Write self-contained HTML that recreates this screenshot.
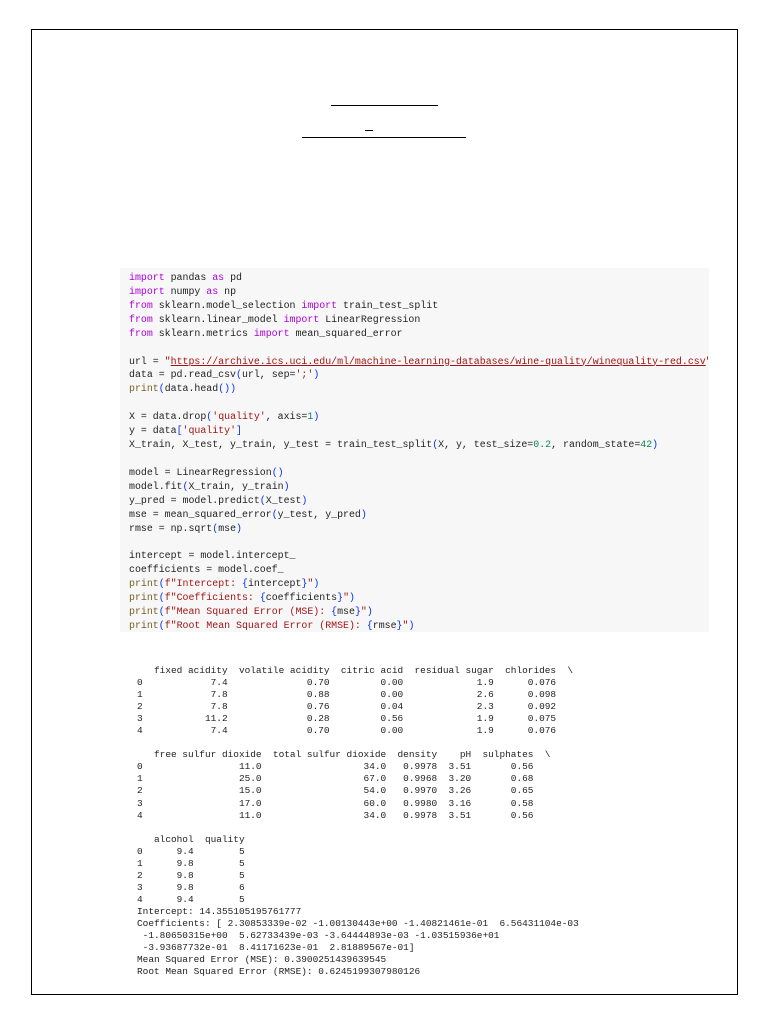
<!DOCTYPE html>
<html><head><meta charset="utf-8"><style>
body{margin:0;width:768px;height:1024px;background:#fff;position:relative;overflow:hidden}
.frame{position:absolute;left:31px;top:29px;width:705px;height:964px;border:1px solid #000}
.ln{position:absolute;height:1px;background:#000}
.code{position:absolute;left:120px;top:268px;width:589px;height:364px;background:#f7f7f7;overflow:hidden}
.code pre{margin:0;position:absolute;left:9px;top:3px;font:9.92px/13.92px "Liberation Mono",monospace;color:#222;white-space:pre}
.out{margin:0;position:absolute;left:137px;top:665px;font:9.45px/12.04px "Liberation Mono",monospace;color:#222;white-space:pre}
.k{color:#af00db}.f{color:#795e26}.s{color:#a31515}.p{color:#0431fa}.n{color:#098658}.u{text-decoration:underline}
</style></head><body>
<div class="frame"></div>
<div class="ln" style="left:331px;top:105px;width:107px"></div>
<div class="ln" style="left:302px;top:137px;width:164px"></div>
<div class="ln" style="left:365px;top:130px;width:8px"></div>
<div class="code"><pre><span class="k">import</span> pandas <span class="k">as</span> pd
<span class="k">import</span> numpy <span class="k">as</span> np
<span class="k">from</span> sklearn.model_selection <span class="k">import</span> train_test_split
<span class="k">from</span> sklearn.linear_model <span class="k">import</span> LinearRegression
<span class="k">from</span> sklearn.metrics <span class="k">import</span> mean_squared_error

url = <span class="s">"<span class="u">https://archive.ics.uci.edu/ml/machine-learning-databases/wine-quality/winequality-red.csv</span>"</span>
data = pd.read_csv<span class="p">(</span>url, sep=<span class="s">';'</span><span class="p">)</span>
<span class="f">print</span><span class="p">(</span>data.head<span class="p">())</span>

X = data.drop<span class="p">(</span><span class="s">'quality'</span>, axis=<span class="n">1</span><span class="p">)</span>
y = data<span class="p">[</span><span class="s">'quality'</span><span class="p">]</span>
X_train, X_test, y_train, y_test = train_test_split<span class="p">(</span>X, y, test_size=<span class="n">0.2</span>, random_state=<span class="n">42</span><span class="p">)</span>

model = LinearRegression<span class="p">()</span>
model.fit<span class="p">(</span>X_train, y_train<span class="p">)</span>
y_pred = model.predict<span class="p">(</span>X_test<span class="p">)</span>
mse = mean_squared_error<span class="p">(</span>y_test, y_pred<span class="p">)</span>
rmse = np.sqrt<span class="p">(</span>mse<span class="p">)</span>

intercept = model.intercept_
coefficients = model.coef_
<span class="f">print</span><span class="p">(</span><span class="s">f"Intercept: </span><span class="p">{</span>intercept<span class="p">}</span><span class="s">"</span><span class="p">)</span>
<span class="f">print</span><span class="p">(</span><span class="s">f"Coefficients: </span><span class="p">{</span>coefficients<span class="p">}</span><span class="s">"</span><span class="p">)</span>
<span class="f">print</span><span class="p">(</span><span class="s">f"Mean Squared Error (MSE): </span><span class="p">{</span>mse<span class="p">}</span><span class="s">"</span><span class="p">)</span>
<span class="f">print</span><span class="p">(</span><span class="s">f"Root Mean Squared Error (RMSE): </span><span class="p">{</span>rmse<span class="p">}</span><span class="s">"</span><span class="p">)</span></pre></div>
<pre class="out">   fixed acidity  volatile acidity  citric acid  residual sugar  chlorides  \
0            7.4              0.70         0.00             1.9      0.076   
1            7.8              0.88         0.00             2.6      0.098   
2            7.8              0.76         0.04             2.3      0.092   
3           11.2              0.28         0.56             1.9      0.075   
4            7.4              0.70         0.00             1.9      0.076   

   free sulfur dioxide  total sulfur dioxide  density    pH  sulphates  \
0                 11.0                  34.0   0.9978  3.51       0.56   
1                 25.0                  67.0   0.9968  3.20       0.68   
2                 15.0                  54.0   0.9970  3.26       0.65   
3                 17.0                  60.0   0.9980  3.16       0.58   
4                 11.0                  34.0   0.9978  3.51       0.56   

   alcohol  quality  
0      9.4        5  
1      9.8        5  
2      9.8        5  
3      9.8        6  
4      9.4        5  
Intercept: 14.355105195761777
Coefficients: [ 2.30853339e-02 -1.00130443e+00 -1.40821461e-01  6.56431104e-03
 -1.80650315e+00  5.62733439e-03 -3.64444893e-03 -1.03515936e+01
 -3.93687732e-01  8.41171623e-01  2.81889567e-01]
Mean Squared Error (MSE): 0.3900251439639545
Root Mean Squared Error (RMSE): 0.6245199307980126</pre>
</body></html>
